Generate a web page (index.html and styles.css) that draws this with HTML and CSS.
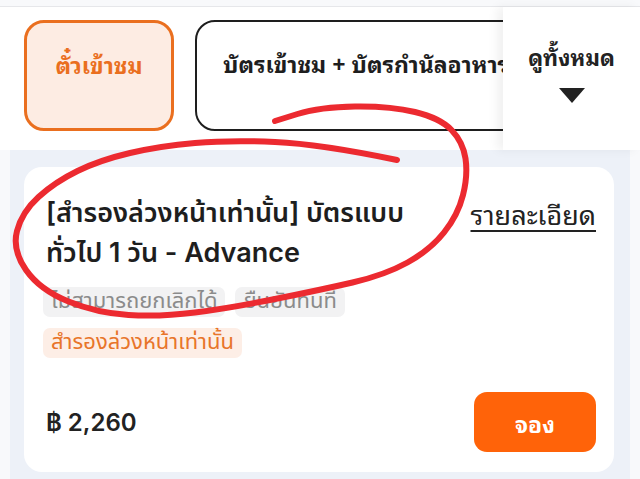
FILE: index.html
```html
<!DOCTYPE html>
<html lang="th">
<head>
<meta charset="utf-8">
<link rel="stylesheet" href="styles.css">
</head>
<body>
<header class="header">
  <div class="tabs">
    <div class="tab tab-active">ตั๋วเข้าชม</div>
    <div class="tab tab-outline">บัตรเข้าชม + บัตรกำนัลอาหาร</div>
  </div>
  <div class="see-all">
    <span class="see-all-label">ดูทั้งหมด</span>
    <svg class="caret" width="26" height="16" viewBox="0 0 26 16"><polygon points="0,0 26,0 13,15" fill="#222"/></svg>
  </div>
</header>
<main class="content-wrap">
  <div class="content">
    <section class="card">
      <div class="card-top">
        <h2 class="title">[สำรองล่วงหน้าเท่านั้น] บัตรแบบ<br>ทั่วไป 1 วัน - Advance</h2>
        <a class="details" href="#">รายละเอียด</a>
      </div>
      <div class="tags">
        <span class="tag">ไม่สามารถยกเลิกได้</span>
        <span class="tag">ยืนยันทันที</span>
      </div>
      <div class="tags">
        <span class="tag tag-orange">สำรองล่วงหน้าเท่านั้น</span>
      </div>
      <div class="card-footer">
        <span class="price">฿ 2,260</span>
        <button class="book">จอง</button>
      </div>
    </section>
  </div>
</main>
<svg class="scribble" width="640" height="479" viewBox="0 0 640 479">
  <path d="M275,121 L297.5,114 Q320,107 355,106.5 Q390,106 415,112 Q440,118 451.5,130 Q463,142 465.5,158.5 Q468,175 463,195 Q458,215 444,232.5 Q430,250 407.5,262.5 Q385,275 352.5,282.5 Q320,290 275,299 Q230,308 195,312.5 Q160,317 128.5,315 Q97,313 68.5,301.5 Q40,290 26,270 Q12,250 17,231 Q22,212 38.5,197 Q55,182 77.5,171 Q100,160 130,153 Q160,146 195,143 Q230,140 275,142 Q320,144 397,160" fill="none" stroke="#ec2a30" stroke-width="6" stroke-linecap="round" stroke-linejoin="round"/>
</svg>
</body>
</html>
```

FILE: styles.css
```css
* { box-sizing: border-box; }
html, body { margin: 0; padding: 0; }
body {
  width: 640px;
  height: 479px;
  overflow: hidden;
  background: #f8f9fb;
  font-family: "Noto Sans Thai", "Noto Sans", "Inter", sans-serif;
  color: #222;
  position: relative;
}
.header {
  display: flex;
  margin-top: 6px;
  border-top: 1px solid #e6e7ea;
  background: #fff;
  height: 144px;
}
.tabs {
  flex: 1;
  display: flex;
  gap: 21px;
  padding: 13px 0 0 24px;
  overflow: hidden;
  min-width: 0;
}
.tab {
  flex: none;
  height: 111px;
  border-radius: 20px;
  font-family: "Noto Sans Thai Looped", "Noto Sans Thai", sans-serif;
  font-weight: 700;
  font-size: 23px;
  line-height: 30px;
  padding-top: 26px;
  white-space: nowrap;
}
.tab-active {
  width: 150px;
  border: 3px solid #ea6f1f;
  background: #fdece3;
  color: #ea6f1f;
  text-align: center;
}
.tab-outline {
  border: 2px solid #1e1e1e;
  padding-left: 26px;
  padding-right: 26px;
  color: #1e1e1e;
}
.see-all {
  flex: none;
  width: 137px;
  background: #fff;
  box-shadow: -6px 0 10px rgba(0,0,0,0.06);
  display: flex;
  flex-direction: column;
  align-items: center;
  padding-top: 34px;
  position: relative;
  z-index: 1;
}
.see-all-label {
  font-family: "Noto Sans Thai Looped", "Noto Sans Thai", sans-serif;
  font-weight: 700;
  font-size: 22px;
  line-height: 30px;
}
.caret { margin-top: 17px; }
.content-wrap {
  padding: 0 10px;
}
.content {
  background: #edf1f8;
  height: 330px;
  padding: 17px 16px 0 14px;
}
.card {
  background: #fff;
  border-radius: 18px;
  height: 305px;
  padding: 26px 18px 20px 22px;
  display: flex;
  flex-direction: column;
}
.card-top {
  display: flex;
  justify-content: space-between;
  align-items: flex-start;
}
.title {
  margin: 0;
  width: 400px;
  font-family: "Inter", "Noto Sans Thai", sans-serif;
  font-size: 27px;
  font-weight: 600;
  line-height: 40px;
  color: #1e1e1e;
  white-space: nowrap;
}
.details {
  color: #222;
  font-family: "Noto Sans Thai Looped", "Noto Sans Thai", sans-serif;
  font-size: 27px;
  line-height: 40px;
  text-decoration: underline;
  text-decoration-thickness: 2px;
  text-underline-offset: 5px;
}
.tags {
  display: flex;
  gap: 10px;
  margin-left: -3px;
  margin-top: 14px;
}
.tags + .tags { margin-top: 11px; }
.tag {
  background: #f2f2f3;
  color: #8b8b8b;
  font-size: 22px;
  line-height: 30px;
  padding: 0 8px;
  border-radius: 7px;
}
.tag-orange {
  background: #fdeee6;
  color: #e8752a;
}
.card-footer {
  margin-top: auto;
  display: flex;
  justify-content: space-between;
  align-items: center;
}
.price {
  font-family: "Inter", "Noto Sans Thai", sans-serif;
  font-weight: 600;
  font-size: 24px;
}
.book {
  width: 122px;
  height: 60px;
  border: none;
  border-radius: 13px;
  background: #ff6309;
  color: #fff;
  font-family: "Noto Sans Thai Looped", "Noto Sans Thai", sans-serif;
  font-weight: 700;
  font-size: 23px;
}
.scribble {
  position: absolute;
  left: 0;
  top: 0;
  pointer-events: none;
  z-index: 5;
}
```
